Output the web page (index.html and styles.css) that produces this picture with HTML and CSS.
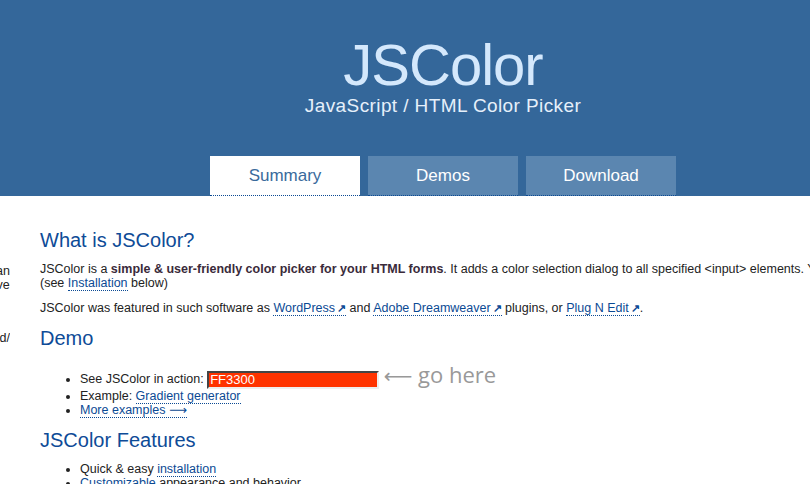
FILE: index.html
```html
<!DOCTYPE html>
<html lang="en">
<head>
  <meta charset="UTF-8" />
  <title>JSColor - JavaScript Color Picker</title>
  <link rel="stylesheet" href="styles.css">
</head>
<body>
<div class="page">

  <div class="header">
    <div class="logo">JSColor</div>
    <div class="tagline">JavaScript / HTML Color Picker</div>
    <div class="tabs">
      <a class="tab active" href="#">Summary</a>
      <a class="tab" href="#">Demos</a>
      <a class="tab" href="#">Download</a>
    </div>
  </div>

  <div class="layout">
    <!-- sidebar, mostly scrolled out of view -->
    <div class="sidebar">
      <span>Free for any project you can</span>
      <span class="short">and commercial use too, even in</span>
      <span class="gap">jscolor.com/download/</span>
    </div>

    <div class="content">
      <h2>What is JSColor?</h2>
      <p>JSColor is a <strong>simple &amp; user-friendly color picker for your HTML forms</strong>. It adds a color selection dialog to all specified &lt;input&gt; elements. You can use it<br>
      (see <a href="#">Installation</a> below)</p>
      <p>JSColor was featured in such software as <a class="ext" href="#">WordPress</a> and <a class="ext" href="#">Adobe Dreamweaver</a> plugins, or <a class="ext" href="#">Plug N Edit</a>.</p>

      <h2>Demo</h2>
      <ul>
        <li class="demo-row">See JSColor in action: <input class="color-input" value="FF3300"> <span class="go-here"><span class="arrow">&#x27F5;</span> go here</span></li>
        <li>Example: <a href="#">Gradient generator</a></li>
        <li><a href="#">More examples <span class="arrow">&#x27F6;</span></a></li>
      </ul>

      <h2>JSColor Features</h2>
      <ul>
        <li>Quick &amp; easy <a href="#">installation</a></li>
        <li><a href="#">Customizable</a> appearance and behavior</li>
      </ul>
    </div>
  </div>

</div>
</body>
</html>
```

FILE: styles.css
```css
:root {
  --header-bg: #34679a;
  --tab-bg: #5b86b0;
  --heading: #0e4b97;
  --link: #0b4a94;
  --text: #222222;
}

* {
  box-sizing: border-box;
  margin: 0;
  padding: 0;
}

body {
  font-family: 'Liberation Sans', Arial, sans-serif;
  font-size: 12.5px;
  color: var(--text);
  background: #ffffff;
  overflow: hidden;
}

.page {
  width: 886px;
}

.header {
  background-color: var(--header-bg);
  text-align: center;
  padding-top: 35px;
  height: 196px;
}

.logo {
  font-size: 58px;
  line-height: 60px;
  color: #d4e8fc;
  letter-spacing: -1px;
}

.tagline {
  font-size: 19px;
  line-height: 22px;
  letter-spacing: 0.4px;
  color: #e6f0fa;
}

.tabs {
  display: flex;
  justify-content: center;
  gap: 8px;
  margin-top: 39px;
}

.tab {
  width: 150px;
  height: 40px;
  line-height: 40px;
  font-size: 17px;
  color: #ffffff;
  background-color: var(--tab-bg);
  text-decoration: none;
}

.tab.active {
  background-color: #ffffff;
  color: #3a6a9c;
}

.layout {
  display: flex;
  margin-left: -150px;
}

.sidebar {
  width: 160px;
  flex-shrink: 0;
  padding-top: 68px;
  text-align: right;
  white-space: nowrap;
  overflow: hidden;
  line-height: 14px;
}

.sidebar span {
  display: block;
}

.sidebar .short {
  padding-right: 5px;
}

.sidebar .gap {
  margin-top: 39px;
}

.content {
  padding-left: 30px;
  padding-top: 32px;
  white-space: nowrap;
}

h2 {
  font-size: 20px;
  font-weight: normal;
  color: var(--heading);
  line-height: 24px;
  margin-bottom: 10px;
}

p {
  line-height: 14px;
  margin-bottom: 11px;
}

strong {
  color: #3a2a3a;
}

a {
  color: var(--link);
  text-decoration: none;
  border-bottom: 1px dotted var(--link);
}

a.ext::after {
  content: "\2197";
  font-weight: bold;
  font-size: 11px;
  margin-left: 2px;
}

.arrow {
  font-family: 'DejaVu Sans', sans-serif;
}

ul {
  list-style: disc;
  padding-left: 40px;
  margin-bottom: 11px;
}

li {
  line-height: 14px;
}

.demo-row {
  line-height: 20px;
  padding-top: 9px;
  height: 29px;
}

.color-input {
  width: 172px;
  height: 18px;
  background: #ff3300;
  color: #ffffff;
  font-family: 'Liberation Sans', Arial, sans-serif;
  font-size: 13px;
  border: 2px inset #999999;
  border-right-color: #eeeeee;
  border-bottom-color: #eeeeee;
  padding: 0 1px;
  vertical-align: middle;
}

.go-here {
  font-family: 'Open Sans', sans-serif;
  font-size: 22px;
  line-height: 10px;
  vertical-align: top;
  color: #999999;
  margin-left: 1px;
}

.go-here .arrow {
  font-size: 20px;
}
```
